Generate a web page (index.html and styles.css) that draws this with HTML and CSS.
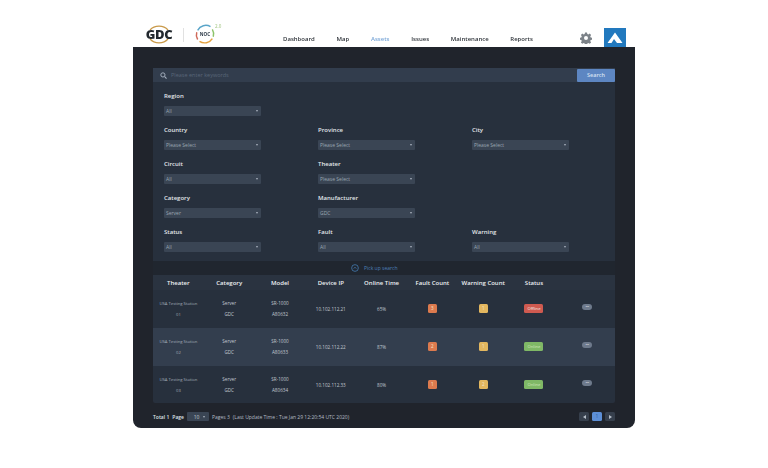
FILE: index.html
```html
<!DOCTYPE html>
<html lang="en">
<head>
<meta charset="utf-8">
<title>GDC NOC Assets</title>
<link rel="stylesheet" href="styles.css">
</head>
<body>
<div class="page">
  <header class="top">
    <div class="brand">
      <svg class="logo-gdc" viewBox="0 0 30 20" width="30" height="20">
        <path d="M6 6 A11 9 0 0 1 24 6" fill="none" stroke="#c99a4a" stroke-width="1.2"/>
        <path d="M6 15 A11 9 0 0 0 24 15" fill="none" stroke="#c99a4a" stroke-width="1.2"/>
      </svg>
      <span class="gdc-word">GDC</span>
      <span class="brand-sep"></span>
      <svg class="logo-noc" viewBox="0 0 24 24" width="22" height="22">
        <path d="M4 8 A10 10 0 0 1 18 4" fill="none" stroke="#5aa5c9" stroke-width="1.6"/>
        <path d="M20 7 A10 10 0 0 1 21 15" fill="none" stroke="#8cc46a" stroke-width="1.6"/>
        <path d="M20 17 A10 10 0 0 1 6 20" fill="none" stroke="#e3a13f" stroke-width="1.6"/>
        <path d="M4 18 A10 10 0 0 1 3 10" fill="none" stroke="#cf6a5a" stroke-width="1.6"/>
        <text x="12" y="14" text-anchor="middle" class="noc-word">NOC</text>
      </svg>
      <span class="noc-ver">2.0</span>
    </div>
    <nav class="nav">
      <a class="nav-item">Dashboard</a>
      <a class="nav-item">Map</a>
      <a class="nav-item active">Assets</a>
      <a class="nav-item">Issues</a>
      <a class="nav-item">Maintenance</a>
      <a class="nav-item">Reports</a>
    </nav>
    <div class="top-right">
      <svg class="gear" viewBox="0 0 24 24" width="12" height="12">
        <path fill="#7c8288" fill-rule="evenodd" d="M10 1h4l.6 3 2.2.9 2.6-1.7 2.8 2.8-1.7 2.6.9 2.2 3 .6v4l-3 .6-.9 2.2 1.7 2.6-2.8 2.8-2.6-1.7-2.2.9-.6 3h-4l-.6-3-2.2-.9-2.6 1.7-2.8-2.8 1.7-2.6-.9-2.2-3-.6v-4l3-.6.9-2.2-1.7-2.6 2.8-2.8 2.6 1.7 2.2-.9zM12 8a4 4 0 1 0 0 8 4 4 0 0 0 0-8z"/>
      </svg>
      <div class="tile">
        <svg viewBox="0 0 22 19" width="22" height="19">
          <path fill="#fff" d="M11 4.5 L18.5 15 H13 L10 11 L7.5 15 H3.5 Z"/>
        </svg>
      </div>
    </div>
  </header>

  <main class="panel">
    <div class="search">
      <svg class="search-icon" viewBox="0 0 12 12" width="7" height="7">
        <circle cx="5" cy="5" r="3.6" fill="none" stroke="#a9b4c2" stroke-width="1.6"/>
        <path d="M8 8l3.2 3.2" stroke="#a9b4c2" stroke-width="1.8"/>
      </svg>
      <span class="search-ph">Please enter keywords</span>
      <button class="search-btn">Search</button>
    </div>

    <section class="filters">
      <div class="field"><label class="lbl">Region</label><div class="sel"><span>All</span><i class="caret"></i></div></div>
      <div class="field"></div><div class="field"></div>
      <div class="field"><label class="lbl">Country</label><div class="sel"><span>Please Select</span><i class="caret"></i></div></div>
      <div class="field"><label class="lbl">Province</label><div class="sel"><span>Please Select</span><i class="caret"></i></div></div>
      <div class="field"><label class="lbl">City</label><div class="sel"><span>Please Select</span><i class="caret"></i></div></div>
      <div class="field"><label class="lbl">Circuit</label><div class="sel"><span>All</span><i class="caret"></i></div></div>
      <div class="field"><label class="lbl">Theater</label><div class="sel"><span>Please Select</span><i class="caret"></i></div></div>
      <div class="field"></div>
      <div class="field"><label class="lbl">Category</label><div class="sel"><span>Server</span><i class="caret"></i></div></div>
      <div class="field"><label class="lbl">Manufacturer</label><div class="sel"><span>GDC</span><i class="caret"></i></div></div>
      <div class="field"></div>
      <div class="field"><label class="lbl">Status</label><div class="sel"><span>All</span><i class="caret"></i></div></div>
      <div class="field"><label class="lbl">Fault</label><div class="sel"><span>All</span><i class="caret"></i></div></div>
      <div class="field"><label class="lbl">Warning</label><div class="sel"><span>All</span><i class="caret"></i></div></div>
    </section>

    <div class="pickup">
      <svg viewBox="0 0 10 10" width="8" height="8">
        <circle cx="5" cy="5" r="4.2" fill="none" stroke="#4d8fd0" stroke-width=".8"/>
        <path d="M3.4 5.8 L5 4 L6.6 5.8" fill="none" stroke="#4d8fd0" stroke-width=".8"/>
      </svg>
      <span>Pick up search</span>
    </div>

    <section class="table">
      <div class="row head">
        <div>Theater</div><div>Category</div><div>Model</div><div>Device IP</div><div>Online Time</div><div>Fault Count</div><div>Warning Count</div><div>Status</div><div></div>
      </div>
      <div class="row body">
        <div class="small"><p>USA Testing Station</p><p>01</p></div>
        <div><p>Server</p><p>GDC</p></div>
        <div><p>SR-1000</p><p>A80632</p></div>
        <div>10.102.112.21</div>
        <div>65%</div>
        <div><span class="count fault">3</span></div>
        <div><span class="count warn">1</span></div>
        <div><span class="state off">Offline</span></div>
        <div><span class="more">•••</span></div>
      </div>
      <div class="row body alt">
        <div class="small"><p>USA Testing Station</p><p>02</p></div>
        <div><p>Server</p><p>GDC</p></div>
        <div><p>SR-1000</p><p>A80633</p></div>
        <div>10.102.112.22</div>
        <div>87%</div>
        <div><span class="count fault">2</span></div>
        <div><span class="count warn">1</span></div>
        <div><span class="state on">Online</span></div>
        <div><span class="more">•••</span></div>
      </div>
      <div class="row body">
        <div class="small"><p>USA Testing Station</p><p>03</p></div>
        <div><p>Server</p><p>GDC</p></div>
        <div><p>SR-1000</p><p>A80634</p></div>
        <div>10.102.112.33</div>
        <div>80%</div>
        <div><span class="count fault">1</span></div>
        <div><span class="count warn">2</span></div>
        <div><span class="state on">Online</span></div>
        <div><span class="more">•••</span></div>
      </div>
    </section>

    <footer class="foot">
      <div class="foot-info">
        <b>Total 1</b><b>Page</b>
        <span class="page-size">10<i class="caret"></i></span>
        <span>Pages 3</span>
        <span>(Last Update Time : Tue Jan 29 12:20:54 UTC 2020)</span>
      </div>
      <div class="pager">
        <span class="pg"><i class="arrow-l"></i></span><span class="pg cur">1</span><span class="pg"><i class="arrow-r"></i></span>
      </div>
    </footer>
  </main>
</div>
</body>
</html>
```
FILE: styles.css
```css
* { box-sizing: border-box; }
html, body { margin: 0; padding: 0; background: #fff; }
body { font-family: "Open Sans", "Liberation Sans", sans-serif; overflow: hidden; }
p { margin: 0; }

.page {
  width: 768px;
  height: 468px;
  padding: 0 133px;
  opacity: .999;
  filter: blur(0.6px);
  will-change: filter, opacity;
}

/* header */
.top { height: 47px; display: flex; position: relative; }
.brand { width: 150px; padding: 24px 0 0 12px; display: flex; align-items: flex-start; position: relative; }
.logo-gdc { position: absolute; left: 11px; top: 24px; }
.gdc-word { font: 800 13px/20px "Open Sans", sans-serif; color: #22282e; width: 28px; text-align: center; letter-spacing: -.3px; position: relative; }
.brand-sep { width: 1px; height: 14px; background: #e1e1e1; margin: 4px 10px 0 10px; }
.logo-noc { margin-top: -1px; }
.noc-word { font: 700 5px "Open Sans", sans-serif; fill: #2c3a48; }
.noc-ver { font-size: 4.5px; color: #9cc27a; margin-left: -1px; margin-top: -1px; }

.nav { display: flex; align-items: flex-end; padding: 0 0 3px 0; gap: 21.7px; }
.nav-item { font-size: 6px; font-weight: 600; color: #2f343a; line-height: 9px; }
.nav-item.active { color: #7ca8d8; }

.top-right { margin-left: auto; margin-right: 9px; display: flex; align-items: flex-end; gap: 12px; }
.gear { margin-bottom: 3px; }
.tile { width: 22px; height: 19px; background: #2279be; display: flex; }

/* main panel */
.panel {
  width: 502px;
  height: 381px;
  background: #20242c;
  border-radius: 0 0 8px 8px;
  padding: 21px 20px 0;
}

.search {
  height: 14px;
  background: #323d4d;
  display: flex;
  align-items: center;
  padding-left: 7px;
}
.search-ph { font-size: 5.5px; color: #596678; margin-left: 4px; }
.search-btn {
  margin-left: auto;
  width: 38px;
  height: 13px;
  border: 0;
  padding: 0;
  border-radius: 1px;
  background: #5d86c2;
  color: #d6e2f2;
  font: 600 5.5px "Open Sans", sans-serif;
}

.filters {
  height: 179px;
  background: #27303d;
  display: grid;
  grid-template-columns: 154px 154px 1fr;
  grid-auto-rows: 34px;
  padding: 9px 0 0 11px;
}
.lbl { display: block; font-size: 6px; font-weight: 600; line-height: 10px; color: #e2e6ea; margin-bottom: 5px; }
.sel {
  width: 97px;
  height: 10px;
  background: #3a4554;
  border-radius: 1px;
  display: flex;
  align-items: center;
  justify-content: space-between;
  padding: 0 3px 0 2px;
  font-size: 5px;
  color: #9aa5b2;
}
.caret { width: 0; height: 0; border: 1.5px solid transparent; border-top: 2px solid #aab3bf; border-bottom: 0; }

.pickup {
  height: 14px;
  background: #20262f;
  display: flex;
  align-items: center;
  gap: 5px;
  padding-left: 198px;
  font-size: 5px;
  color: #4d7fb8;
}

.table { height: 128px; background: #27303d; border-radius: 0 0 2px 2px; }
.row { display: grid; grid-template-columns: repeat(8, 50.8px) 1fr; text-align: center; align-items: center; }
.head { height: 15px; font-size: 6px; font-weight: 600; color: #eceff2; background: #2a3340; white-space: nowrap; }
.body { height: 38px; font-size: 4.6px; color: #c2c9d2; }
.body p { line-height: 11px; }
.body .small { font-size: 4.2px; color: #a3adb9; }
.alt { background: #333e4e; height: 38px; }

.count {
  display: inline-block;
  width: 9px;
  height: 9px;
  line-height: 9px;
  margin-bottom: 2px;
  border-radius: 1.5px;
  font-size: 4.5px;
  color: #f4e4d0;
}
.fault { background: #dc7a4e; }
.warn { background: #e3b75f; }
.state {
  display: inline-block;
  width: 19px;
  height: 9px;
  line-height: 9px;
  margin-bottom: 2px;
  border-radius: 1.5px;
  font-size: 4.2px;
  color: #f3ebe6;
}
.off { background: #cf5a50; }
.on { background: #7fb866; color: #cfe7bd; }
.more {
  display: inline-block;
  width: 10px;
  height: 6px;
  line-height: 6px;
  margin-bottom: 5px;
  border-radius: 3px;
  background: #6e7a8c;
  color: #d4dae2;
  font-size: 3.5px;
  letter-spacing: -.2px;
}

.foot {
  height: 27px;
  display: flex;
  align-items: center;
  justify-content: space-between;
  font-size: 5px;
  color: #b4bcc6;
}
.foot-info { display: flex; align-items: center; gap: 3px; }
.foot-info b { font-weight: 600; color: #dfe3e8; }
.page-size {
  width: 22px;
  height: 9px;
  background: #3a4554;
  border-radius: 1px;
  display: flex;
  align-items: center;
  justify-content: space-around;
  padding: 0 2px 0 5px;
  color: #c3cad3;
}
.pager { display: flex; gap: 3px; }
.pg {
  width: 10px;
  height: 9px;
  line-height: 9px;
  border-radius: 1.5px;
  background: #363f4c;
  font-size: 5px;
  color: #aeb6c0;
  display: flex;
  align-items: center;
  justify-content: center;
}
.cur { background: #5d8fd6; color: #2f5d9c; }
.arrow-l { width: 0; height: 0; border: 2px solid transparent; border-right: 3px solid #b8c0ca; border-left: 0; }
.arrow-r { width: 0; height: 0; border: 2px solid transparent; border-left: 3px solid #b8c0ca; border-right: 0; }
```
